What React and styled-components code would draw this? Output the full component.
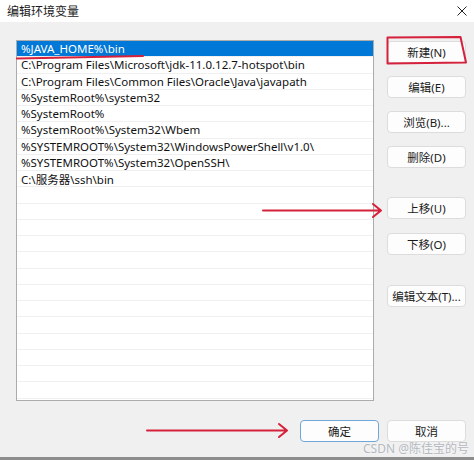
import React from 'react'
import styled, { createGlobalStyle } from 'styled-components';

const Global = createGlobalStyle`
      html, body { margin: 0; padding: 0; background: #ffffff; }
      body { font-family: "Noto Sans", "Noto Sans CJK SC", sans-serif; }
`;

const Window = styled.div`
      position: relative;
      width: 474px;
      height: 460px;
      display: flex;
      flex-direction: column;
      background: #f0f0f0;
      overflow: hidden;
`;

const TitleBar = styled.div`
      height: 22px;
      flex: none;
      display: flex;
      align-items: center;
      justify-content: space-between;
      padding: 0 4px 0 7px;
      background: #ffffff;
`;

const Title = styled.span`
      font-family: "Noto Sans CJK SC", sans-serif;
      font-size: 12px;
      color: #1b1b1b;
      margin-top: -2px;
`;

const Body = styled.div`
      flex: 1;
      display: flex;
      flex-direction: column;
      padding: 18px 8px 0 16px;
`;

const Main = styled.div`
      display: flex;
      gap: 13px;
`;

const List = styled.div`
      width: 358px;
      height: 361px;
      box-sizing: border-box;
      border: 1px solid #acacac;
      background: #ffffff;
      overflow: hidden;
`;

const Row = styled.div`
      height: 16.25px;
      box-sizing: border-box;
      display: flex;
      align-items: center;
      padding-left: 4px;
      border-bottom: 1px solid #f0f0f0;
      font-size: 11.5px;
      white-space: nowrap;
      color: ${p => (p.$active ? '#ffffff' : '#111111')};
      background: ${p => (p.$active ? '#0078d7' : 'transparent')};
`;

const Side = styled.div`
      display: flex;
      flex-direction: column;
      padding-top: 1px;
`;

const Button = styled.button`
      width: 79px;
      height: 22px;
      box-sizing: border-box;
      padding: 0;
      margin-top: ${p => p.$gap || 0}px;
      border: 1px solid ${p => (p.$primary ? '#6ea7d8' : '#dcdcdc')};
      border-radius: 4px;
      background: #fdfdfd;
      font-family: "Noto Sans", "Noto Sans CJK SC", sans-serif;
      font-size: 11.5px;
      color: #1a1a1a;
      display: flex;
      align-items: center;
      justify-content: center;
`;

const Footer = styled.div`
      display: flex;
      justify-content: flex-end;
      gap: 8px;
      margin-top: 19px;
`;

const BottomEdge = styled.div`
      height: 3px;
      flex: none;
      margin-top: auto;
      background: #8d8d8d;
`;

const Overlay = styled.svg`
      position: absolute;
      left: 0;
      top: 0;
      pointer-events: none;
`;

const Watermark = styled.span`
      position: absolute;
      right: 5px;
      bottom: 3px;
      font-family: "Noto Sans", "Noto Sans CJK SC", sans-serif;
      font-size: 12px;
      color: #b4b8bf;
      text-shadow: 0 0 2px #ffffff;
`;

const rows = [
      '%JAVA_HOME%\\bin',
      'C:\\Program Files\\Microsoft\\jdk-11.0.12.7-hotspot\\bin',
      'C:\\Program Files\\Common Files\\Oracle\\Java\\javapath',
      '%SystemRoot%\\system32',
      '%SystemRoot%',
      '%SystemRoot%\\System32\\Wbem',
      '%SYSTEMROOT%\\System32\\WindowsPowerShell\\v1.0\\',
      '%SYSTEMROOT%\\System32\\OpenSSH\\',
      'C:\\服务器\\ssh\\bin',
];

const empty = Array.from({ length: 14 });

const App = () => {
      return (
            <Window>
                  <Global />
                  <TitleBar>
                        <Title>编辑环境变量</Title>
                        <svg width="16" height="16" viewBox="0 0 16 16">
                              <path d="M3.5 3.5 L12.5 12.5 M12.5 3.5 L3.5 12.5" stroke="#222" strokeWidth="1" />
                        </svg>
                  </TitleBar>
                  <Body>
                        <Main>
                              <List>
                                    {rows.map((r, i) => (
                                          <Row key={i} $active={i === 0}>{r}</Row>
                                    ))}
                                    {empty.map((_, i) => (
                                          <Row key={'e' + i} />
                                    ))}
                              </List>
                              <Side>
                                    <Button>新建(N)</Button>
                                    <Button $gap={13}>编辑(E)</Button>
                                    <Button $gap={13}>浏览(B)...</Button>
                                    <Button $gap={13}>删除(D)</Button>
                                    <Button $gap={29}>上移(U)</Button>
                                    <Button $gap={14}>下移(O)</Button>
                                    <Button $gap={30}>编辑文本(T)...</Button>
                              </Side>
                        </Main>
                        <Footer>
                              <Button $primary>确定</Button>
                              <Button>取消</Button>
                        </Footer>
                  </Body>
                  <BottomEdge />
                  <Overlay width="474" height="460" viewBox="0 0 474 460">
                        <g stroke="#d5213b" strokeWidth="2" fill="none" strokeLinecap="round" strokeLinejoin="round">
                              <path d="M17 58.5 C60 57.5 110 57 143 56" />
                              <path d="M387.5 37.5 L460.5 37 L466 62.5 L387.5 63.5 Z" />
                              <path d="M263 210.5 L380 210.5 M373 204 L381 210.5 L373 217" />
                              <path d="M147 430.5 L286 430.5 M279 424 L287 430.5 L279 437" />
                        </g>
                  </Overlay>
                  <Watermark>CSDN @陈佳宝的号</Watermark>
            </Window>
      )
};

export default App;
